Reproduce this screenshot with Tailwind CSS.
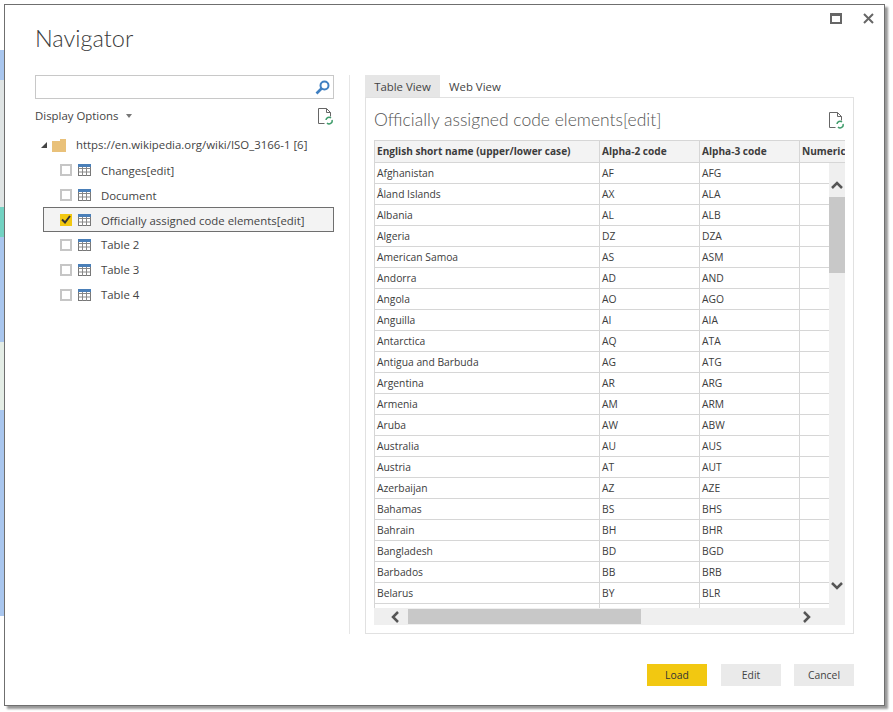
<!DOCTYPE html>
<html><head><meta charset="utf-8"><script src="https://cdn.jsdelivr.net/npm/@tailwindcss/browser@4"></script></head>
<body class="bg-white">
<div class="relative w-[893px] h-[712px] overflow-hidden bg-white font-['Open_Sans','Noto_Sans',sans-serif] text-[#444]">
  <div class="absolute left-0 top-[50px] w-[5px] h-[566px] bg-[#a9c6ee]"></div>
  <div class="absolute left-0 top-[80px] w-[5px] h-[127px] bg-[#dfe4e4]"></div>
  <div class="absolute left-0 top-[207px] w-[5px] h-[30px] bg-[#72d2c2]"></div>
  <div class="absolute left-0 top-[342px] w-[5px] h-[68px] bg-[#e4ede6]"></div>
  <main class="absolute left-[4px] top-[4px] w-[881px] h-[702px] bg-white border border-[#6f6f6f] shadow-[3px_3px_2px_rgba(0,0,0,0.4)] flex flex-col">
    <div class="absolute right-[42px] top-[8px]"><svg width="12" height="11" viewBox="0 0 12 11"><rect x="1" y="1" width="10" height="9" fill="none" stroke="#666" stroke-width="2"/><rect x="0" y="0" width="12" height="3" fill="#666"/></svg></div>
    <div class="absolute right-[10px] top-[8px]"><svg width="11" height="11" viewBox="0 0 11 11"><path d="M1 1l9 9M10 1l-9 9" stroke="#666" stroke-width="2" fill="none"/></svg></div>
    <h1 class="ml-[30px] mt-[15px] h-[36px] text-[23.5px] leading-[36px] font-light text-[#3b3b3b] font-['Lato',sans-serif]">Navigator</h1>
    <div class="flex mt-[19px] h-[564px]">
      <section class="w-[299px] ml-[30px] shrink-0">
        <div class="h-[24px] border border-[#c8c8c8] flex items-center justify-end pr-[3px]">
          <svg width="15" height="15" viewBox="0 0 15 15"><circle cx="9.5" cy="5.5" r="4" fill="none" stroke="#3f7fc1" stroke-width="2"/><path d="M6.5 8.5L1.5 13.5" stroke="#3f7fc1" stroke-width="2.6"/></svg>
        </div>
        <div class="flex items-center justify-between mt-[7px] h-[20px] text-[11.4px]">
          <div class="flex items-center gap-[8px] leading-[20px]"><span>Display Options</span><svg width="6" height="4" viewBox="0 0 6 4"><path d="M0 0h6L3 4z" fill="#777"/></svg></div>
          <svg class="mr-[1px]" width="15" height="17" viewBox="0 0 15 17"><path d="M.5.5h8l4 4v4M8.500.5v4h4M.5.5v15h6" fill="none" stroke="#666"/><path d="M8 12a3 3 0 0 1 5-2M14 12a3 3 0 0 1-5 3" fill="none" stroke="#3f9c6b" stroke-width="1.500"/></svg>
        </div>
        <div class="text-[11.4px] mt-[7px]">
          <div class="flex items-center h-[24px] ml-[6px]">
            <svg width="6" height="6" viewBox="0 0 6 6" class="mr-[5px]"><path d="M6 0v6H0z" fill="#444"/></svg>
            <svg width="15" height="13" viewBox="0 0 15 13" class="mr-[9px]"><path d="M0 2h8V0h6v13H0z" fill="#e9c17a"/></svg>
            <span>https://en.wikipedia.org/wiki/ISO_3166-1 [6]</span>
          </div>
          <div class="flex items-center h-[25px] pl-[25px]">
            <span class="w-[12px] h-[12px] border-2 border-[#c6c6c6] mr-[6px]"></span>
            <svg width="13" height="12" viewBox="0 0 13 12" class="mr-[10px]"><rect x=".5" y=".5" width="12" height="11" fill="#fff" stroke="#777"/><path d="M.5 4.500h12M.5 8h12M4.500 3v9M8.500 3v9" stroke="#888"/><rect width="13" height="3" fill="#4a7fb8"/></svg>
            <span class="pt-[2px]">Changes[edit]</span>
          </div>
          <div class="flex items-center h-[25px] pl-[25px]">
            <span class="w-[12px] h-[12px] border-2 border-[#c6c6c6] mr-[6px]"></span>
            <svg width="13" height="12" viewBox="0 0 13 12" class="mr-[10px]"><rect x=".5" y=".5" width="12" height="11" fill="#fff" stroke="#777"/><path d="M.5 4.500h12M.5 8h12M4.500 3v9M8.500 3v9" stroke="#888"/><rect width="13" height="3" fill="#4a7fb8"/></svg>
            <span class="pt-[2px]">Document</span>
          </div>
          <div class="flex items-center h-[25px] pl-[16px] ml-[8px] border border-[#6f6f6f] bg-[#f3f3f3]">
            <span class="w-[12px] h-[12px] bg-[#f2c811] mr-[6px] flex items-center justify-center"><svg width="10" height="9" viewBox="0 0 10 9"><path d="M1 4.500l3 3 5-6.500" fill="none" stroke="#333" stroke-width="2"/></svg></span>
            <svg width="13" height="12" viewBox="0 0 13 12" class="mr-[10px]"><rect x=".5" y=".5" width="12" height="11" fill="#fff" stroke="#777"/><path d="M.5 4.500h12M.5 8h12M4.500 3v9M8.500 3v9" stroke="#888"/><rect width="13" height="3" fill="#4a7fb8"/></svg>
            <span class="pt-[2px]">Officially assigned code elements[edit]</span>
          </div>
          <div class="flex items-center h-[25px] pl-[25px]">
            <span class="w-[12px] h-[12px] border-2 border-[#c6c6c6] mr-[6px]"></span>
            <svg width="13" height="12" viewBox="0 0 13 12" class="mr-[10px]"><rect x=".5" y=".5" width="12" height="11" fill="#fff" stroke="#777"/><path d="M.5 4.500h12M.5 8h12M4.500 3v9M8.500 3v9" stroke="#888"/><rect width="13" height="3" fill="#4a7fb8"/></svg>
            <span>Table 2</span>
          </div>
          <div class="flex items-center h-[25px] pl-[25px]">
            <span class="w-[12px] h-[12px] border-2 border-[#c6c6c6] mr-[6px]"></span>
            <svg width="13" height="12" viewBox="0 0 13 12" class="mr-[10px]"><rect x=".5" y=".5" width="12" height="11" fill="#fff" stroke="#777"/><path d="M.5 4.500h12M.5 8h12M4.500 3v9M8.500 3v9" stroke="#888"/><rect width="13" height="3" fill="#4a7fb8"/></svg>
            <span>Table 3</span>
          </div>
          <div class="flex items-center h-[25px] pl-[25px]">
            <span class="w-[12px] h-[12px] border-2 border-[#c6c6c6] mr-[6px]"></span>
            <svg width="13" height="12" viewBox="0 0 13 12" class="mr-[10px]"><rect x=".5" y=".5" width="12" height="11" fill="#fff" stroke="#777"/><path d="M.5 4.500h12M.5 8h12M4.500 3v9M8.500 3v9" stroke="#888"/><rect width="13" height="3" fill="#4a7fb8"/></svg>
            <span>Table 4</span>
          </div>
        </div>
      </section>
      <div class="w-px h-[559px] bg-[#e6e6e6] ml-[15px]"></div>
      <section class="w-[489px] ml-[15px] shrink-0 flex flex-col h-[559px]">
        <div class="flex h-[22px] text-[11.4px] leading-[23px]">
          <div class="w-[75px] bg-[#e6e6e6] text-center">Table View</div>
          <div class="pl-[9px]">Web View</div>
        </div>
        <div class="relative flex-1 border border-[#e1e1e1] px-[8px]">
          <div class="flex items-center justify-between h-[42px]">
            <h2 class="text-[17.5px] pt-[2px] font-light text-[#555] font-['Lato',sans-serif]">Officially assigned code elements[edit]</h2>
            <svg width="15" height="17" viewBox="0 0 15 17" class="mr-[1px] mt-[3px]"><path d="M.5.5h8l4 4v4M8.500.5v4h4M.5.5v15h6" fill="none" stroke="#666"/><path d="M8 12a3 3 0 0 1 5-2M14 12a3 3 0 0 1-5 3" fill="none" stroke="#3f9c6b" stroke-width="1.500"/></svg>
          </div>
          <div class="relative w-[471px] h-[485px] overflow-hidden text-[10.3px] text-[#3c3c3c]">
            <table class="border-collapse table-fixed w-[472px]">
              <colgroup><col class="w-[225px]"><col class="w-[100px]"><col class="w-[100px]"><col class="w-[47px]"></colgroup>
              <thead><tr class="h-[22px] bg-[#f3f3f3] font-bold text-left text-[10.1px]"><th class="border border-[#d6d6d6] px-[2px] whitespace-nowrap overflow-hidden">English short name (upper/lower case)</th><th class="border border-[#d6d6d6] px-[2px]">Alpha-2 code</th><th class="border border-[#d6d6d6] px-[2px]">Alpha-3 code</th><th class="border border-[#d6d6d6] px-[2px] whitespace-nowrap overflow-hidden">Numeric code</th></tr></thead>
              <tbody class="[&_td]:border [&_td]:border-[#d6d6d6] [&_td]:px-[2px] [&_td]:pt-[1px] [&_td]:pb-0 [&_tr]:h-[21px]">
                <tr><td>Afghanistan</td><td>AF</td><td>AFG</td><td></td></tr>
                <tr><td>Åland Islands</td><td>AX</td><td>ALA</td><td></td></tr>
                <tr><td>Albania</td><td>AL</td><td>ALB</td><td></td></tr>
                <tr><td>Algeria</td><td>DZ</td><td>DZA</td><td></td></tr>
                <tr><td>American Samoa</td><td>AS</td><td>ASM</td><td></td></tr>
                <tr><td>Andorra</td><td>AD</td><td>AND</td><td></td></tr>
                <tr><td>Angola</td><td>AO</td><td>AGO</td><td></td></tr>
                <tr><td>Anguilla</td><td>AI</td><td>AIA</td><td></td></tr>
                <tr><td>Antarctica</td><td>AQ</td><td>ATA</td><td></td></tr>
                <tr><td>Antigua and Barbuda</td><td>AG</td><td>ATG</td><td></td></tr>
                <tr><td>Argentina</td><td>AR</td><td>ARG</td><td></td></tr>
                <tr><td>Armenia</td><td>AM</td><td>ARM</td><td></td></tr>
                <tr><td>Aruba</td><td>AW</td><td>ABW</td><td></td></tr>
                <tr><td>Australia</td><td>AU</td><td>AUS</td><td></td></tr>
                <tr><td>Austria</td><td>AT</td><td>AUT</td><td></td></tr>
                <tr><td>Azerbaijan</td><td>AZ</td><td>AZE</td><td></td></tr>
                <tr><td>Bahamas</td><td>BS</td><td>BHS</td><td></td></tr>
                <tr><td>Bahrain</td><td>BH</td><td>BHR</td><td></td></tr>
                <tr><td>Bangladesh</td><td>BD</td><td>BGD</td><td></td></tr>
                <tr><td>Barbados</td><td>BB</td><td>BRB</td><td></td></tr>
                <tr><td>Belarus</td><td>BY</td><td>BLR</td><td></td></tr>
                <tr><td>&nbsp;</td><td></td><td></td><td></td></tr>
              </tbody>
            </table>
            <div class="absolute right-0 top-[23px] bottom-0 w-[16px] bg-[#efefef] flex flex-col items-center">
              <svg class="mt-[18px]" width="12" height="8" viewBox="0 0 12 8"><path d="M1 7l5-5 5 5" fill="none" stroke="#555" stroke-width="2.500"/></svg>
              <div class="absolute top-[34px] left-0 w-[16px] h-[76px] bg-[#c8c8c8]"></div>
              <svg class="absolute top-[419px]" width="12" height="8" viewBox="0 0 12 8"><path d="M1 1l5 5 5-5" fill="none" stroke="#555" stroke-width="2.500"/></svg>
            </div>
            <div class="absolute left-0 right-0 bottom-0 h-[17px] bg-[#efefef]">
              <svg class="absolute left-[17px] top-[3px]" width="9" height="12" viewBox="0 0 9 12"><path d="M7 1L2 6l5 5" fill="none" stroke="#555" stroke-width="2.500"/></svg>
              <div class="absolute left-[34px] top-[1px] w-[233px] h-[15px] bg-[#c8c8c8]"></div>
              <svg class="absolute left-[428px] top-[3px]" width="9" height="12" viewBox="0 0 9 12"><path d="M2 1l5 5-5 5" fill="none" stroke="#555" stroke-width="2.500"/></svg>
            </div>
          </div>
        </div>
      </section>
    </div>
    <div class="flex justify-end pr-[30px] mt-[25px] text-[10.4px]">
      <button class="w-[60px] h-[22px] pt-[2px] bg-[#f2c811] text-[#333] mr-[14px]">Load</button>
      <button class="w-[60px] h-[22px] pt-[2px] bg-[#eaeaea] text-[#444] mr-[13px]">Edit</button>
      <button class="w-[60px] h-[22px] pt-[2px] bg-[#eaeaea] text-[#444]">Cancel</button>
    </div>
  </main>
</div>
</body></html>
